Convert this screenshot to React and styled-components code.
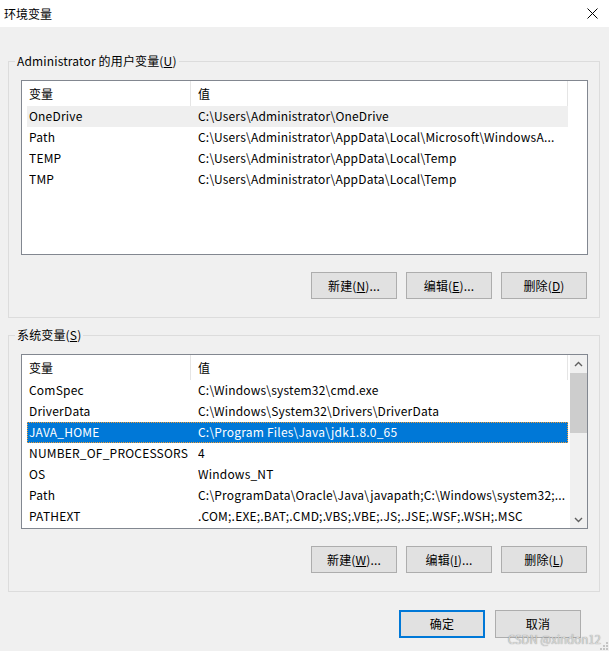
import React from "react";
import styled, { createGlobalStyle } from "styled-components";

const GlobalStyle = createGlobalStyle`
  html, body {
    margin: 0;
    padding: 0;
    background: #f0f0f0;
  }
  body {
    font-family: "Microsoft YaHei UI", "Noto Sans CJK SC", sans-serif;
    font-size: 12px;
    color: #000;
  }
`;

const Window = styled.div`
  position: relative;
  width: 609px;
  height: 651px;
  background: #f0f0f0;
  overflow: hidden;
`;

const TitleBar = styled.div`
  height: 27px;
  background: #ffffff;
  display: flex;
  align-items: center;
  justify-content: space-between;
  padding-left: 4px;
`;

const Title = styled.span`
  font-size: 12px;
  line-height: 16px;
`;

const CloseButton = styled.div`
  width: 34px;
  height: 27px;
  display: flex;
  align-items: center;
  justify-content: center;
`;

const Content = styled.div`
  padding: 26px 9px 0 8px;
  display: flex;
  flex-direction: column;
  gap: 9px;
`;

const Group = styled.fieldset`
  margin: 0;
  padding: 11px 11px 18px 12px;
  border: 1px solid #dcdcdc;
  min-width: 0;
`;

const Legend = styled.legend`
  padding: 0 2px;
  margin-left: -6px;
  line-height: 16px;
  font-size: 12px;
  letter-spacing: 0.15px;
`;

const ListBox = styled.div`
  height: 173px;
  border: 1px solid #828790;
  background: #ffffff;
  display: flex;
  gap: 2px;
`;

const ListMain = styled.div`
  width: 546px;
  display: flex;
  flex-direction: column;
  overflow: hidden;
`;

const Header = styled.div`
  height: 25px;
  display: grid;
  grid-template-columns: 168px 1fr;
  border-right: 1px solid #e5e5e5;
  flex-shrink: 0;
`;

const HeaderCell = styled.div`
  display: flex;
  align-items: center;
  padding-left: 7px;
  border-left: ${(p) => (p.$divider ? "1px solid #e5e5e5" : "none")};
`;

const Row = styled.div`
  height: 21px;
  margin-left: 5px;
  padding-left: 2px;
  display: grid;
  grid-template-columns: 169px 1fr;
  align-items: center;
  flex-shrink: 0;
  box-sizing: border-box;
  background: ${(p) =>
    p.$selected ? "#0078d7" : p.$inactive ? "#efefef" : "transparent"};
  color: ${(p) => (p.$selected ? "#ffffff" : "#000000")};
  outline: ${(p) => (p.$selected ? "1px dotted #f39c33" : "none")};
  outline-offset: -1px;
`;

const Cell = styled.span`
  white-space: nowrap;
  overflow: hidden;
  line-height: 16px;
  letter-spacing: 0.2px;
  margin-top: -1px;
`;

const ScrollBar = styled.div`
  width: 17px;
  background: #f0f0f0;
  display: flex;
  flex-direction: column;
`;

const ScrollArrow = styled.div`
  height: 17px;
  display: flex;
  align-items: center;
  justify-content: center;
  flex-shrink: 0;
`;

const ScrollTrack = styled.div`
  flex: 1;
  padding-top: 1px;
`;

const ScrollThumb = styled.div`
  height: 60px;
  background: #cdcdcd;
`;

const ButtonRow = styled.div`
  display: flex;
  justify-content: flex-end;
  gap: ${(p) => p.$gap || 9}px;
  margin-top: ${(p) => p.$top || 0}px;
  padding-right: ${(p) => p.$right || 0}px;
`;

const Button = styled.div`
  width: 86px;
  height: ${(p) => p.$h || 27}px;
  box-sizing: border-box;
  background: #e1e1e1;
  border: ${(p) => (p.$default ? "2px solid #0078d7" : "1px solid #adadad")};
  display: flex;
  align-items: center;
  justify-content: center;
  font-size: 12px;
  line-height: 16px;
  letter-spacing: 0.15px;
`;

const Watermark = styled.div`
  position: absolute;
  right: 8px;
  bottom: 5px;
  font-family: "Microsoft YaHei UI", "Noto Sans CJK SC", sans-serif;
  font-size: 11.5px;
  line-height: 14px;
  color: rgba(222, 222, 222, 0.95);
  text-shadow: 0 0 1px rgba(70, 70, 70, 0.7);
`;

const Grip = styled.svg`
  position: absolute;
  right: 1px;
  bottom: 1px;
`;

const CloseIcon = () => (
  <svg width="11" height="11" viewBox="0 0 11 11">
    <path d="M0.5 0.5 L10.5 10.5 M10.5 0.5 L0.5 10.5" stroke="#000" strokeWidth="1" fill="none" />
  </svg>
);

const Chevron = ({ up }) => (
  <svg width="9" height="6" viewBox="0 0 9 6">
    <path
      d={up ? "M1 5 L4.5 1.5 L8 5" : "M1 1 L4.5 4.5 L8 1"}
      stroke="#606060"
      strokeWidth="1.4"
      fill="none"
    />
  </svg>
);

const userVars = [
  ["OneDrive", "C:\\Users\\Administrator\\OneDrive", "inactive"],
  ["Path", "C:\\Users\\Administrator\\AppData\\Local\\Microsoft\\WindowsA..."],
  ["TEMP", "C:\\Users\\Administrator\\AppData\\Local\\Temp"],
  ["TMP", "C:\\Users\\Administrator\\AppData\\Local\\Temp"],
];

const sysVars = [
  ["ComSpec", "C:\\Windows\\system32\\cmd.exe"],
  ["DriverData", "C:\\Windows\\System32\\Drivers\\DriverData"],
  ["JAVA_HOME", "C:\\Program Files\\Java\\jdk1.8.0_65", "selected"],
  ["NUMBER_OF_PROCESSORS", "4"],
  ["OS", "Windows_NT"],
  ["Path", "C:\\ProgramData\\Oracle\\Java\\javapath;C:\\Windows\\system32;..."],
  ["PATHEXT", ".COM;.EXE;.BAT;.CMD;.VBS;.VBE;.JS;.JSE;.WSF;.WSH;.MSC"],
];

const VarList = ({ rows, scroll }) => (
  <ListBox>
    <ListMain>
      <Header>
        <HeaderCell>变量</HeaderCell>
        <HeaderCell $divider>值</HeaderCell>
      </Header>
      {rows.map(([name, value, state]) => (
        <Row
          key={name + value}
          $selected={state === "selected"}
          $inactive={state === "inactive"}
        >
          <Cell>{name}</Cell>
          <Cell>{value}</Cell>
        </Row>
      ))}
    </ListMain>
    {scroll && (
      <ScrollBar>
        <ScrollArrow>
          <Chevron up />
        </ScrollArrow>
        <ScrollTrack>
          <ScrollThumb />
        </ScrollTrack>
        <ScrollArrow>
          <Chevron />
        </ScrollArrow>
      </ScrollBar>
    )}
  </ListBox>
);

export default function App() {
  return (
    <Window>
      <GlobalStyle />
      <TitleBar>
        <Title>环境变量</Title>
        <CloseButton>
          <CloseIcon />
        </CloseButton>
      </TitleBar>
      <Content>
        <Group>
          <Legend>
            Administrator 的用户变量(<u>U</u>)
          </Legend>
          <VarList rows={userVars} />
          <ButtonRow $top={17} $right={1}>
            <Button>
              新建(<u>N</u>)...
            </Button>
            <Button>
              编辑(<u>E</u>)...
            </Button>
            <Button>
              删除(<u>D</u>)
            </Button>
          </ButtonRow>
        </Group>
        <Group>
          <Legend>
            系统变量(<u>S</u>)
          </Legend>
          <VarList rows={sysVars} scroll />
          <ButtonRow $top={17} $right={1}>
            <Button>
              新建(<u>W</u>)...
            </Button>
            <Button>
              编辑(<u>I</u>)...
            </Button>
            <Button>
              删除(<u>L</u>)
            </Button>
          </ButtonRow>
        </Group>
        <ButtonRow $top={9} $right={19} $gap={10}>
          <Button $default $h={28}>
            确定
          </Button>
          <Button $h={28}>取消</Button>
        </ButtonRow>
      </Content>
      <Watermark>CSDN @xindon12</Watermark>
      <Grip width="8" height="8" viewBox="0 0 8 8">
        <rect x="6" y="0" width="2" height="2" fill="#c4c4c4" />
        <rect x="3" y="3" width="2" height="2" fill="#c4c4c4" />
        <rect x="6" y="3" width="2" height="2" fill="#c4c4c4" />
        <rect x="0" y="6" width="2" height="2" fill="#c4c4c4" />
        <rect x="3" y="6" width="2" height="2" fill="#c4c4c4" />
        <rect x="6" y="6" width="2" height="2" fill="#c4c4c4" />
      </Grip>
    </Window>
  );
}
